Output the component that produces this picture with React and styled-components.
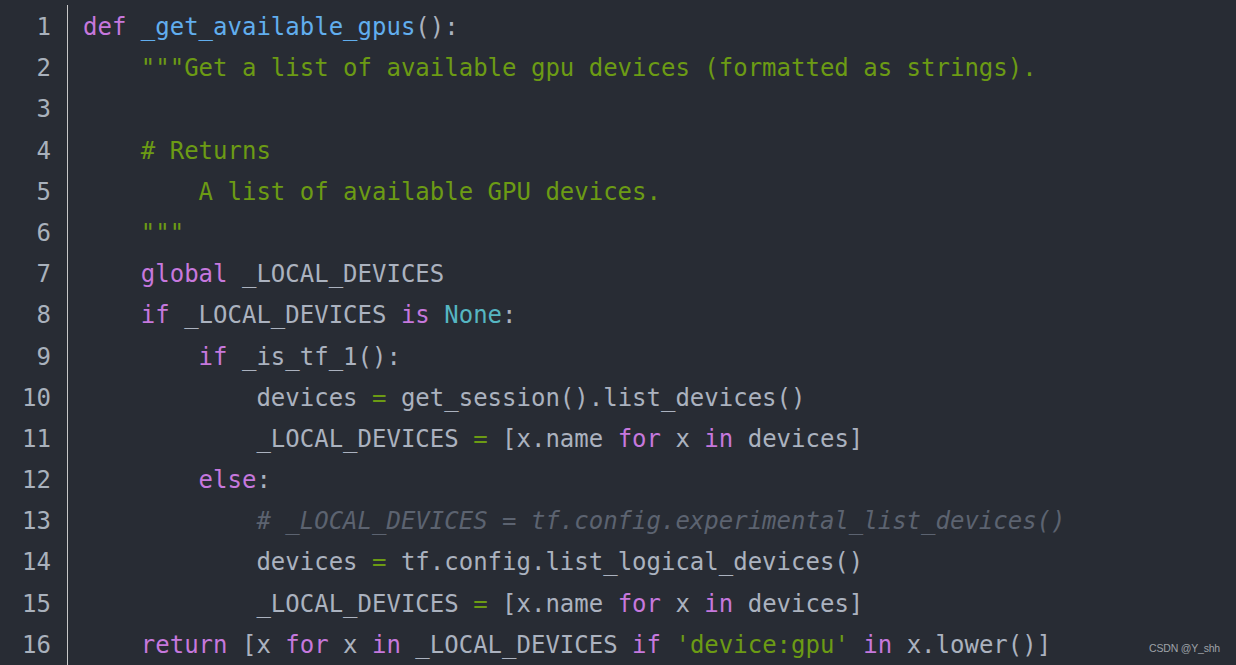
import React from 'react';
import styled, { createGlobalStyle } from 'styled-components';

const GlobalStyle = createGlobalStyle`
  html, body {
    margin: 0;
    padding: 0;
    background: #282c34;
  }
`;

const colors = {
  plain: '#abb2bf',
  kw: '#c678dd',
  title: '#61aeee',
  str: '#6c9b14',
  op: '#6c9b14',
  lit: '#56b6c2',
  comment: '#5c6370',
};

const Page = styled.div`
  position: relative;
  width: 1236px;
  height: 665px;
  overflow: hidden;
  background: #282c34;
  padding-top: 5px;
  box-sizing: border-box;
`;

const CodeBlock = styled.div`
  display: flex;
  height: 100%;
  font-family: 'DejaVu Sans Mono', 'Liberation Mono', monospace;
  font-size: 24px;
  line-height: 41.2px;
`;

const Gutter = styled.ul`
  margin: 0;
  padding: 2px 16px 0 0;
  width: 68px;
  box-sizing: border-box;
  list-style: none;
  text-align: right;
  color: #a9b1bc;
  border-right: 1px solid #c8c8c8;
`;

const LineNo = styled.li`
  height: 41.2px;
`;

const Code = styled.pre`
  margin: 0;
  padding: 2px 0 0 15px;
  font: inherit;
  color: ${colors.plain};
`;

const Line = styled.div`
  height: 41.2px;
  white-space: pre;
`;

const Token = styled.span`
  color: ${p => colors[p.$kind] || colors.plain};
  font-style: ${p => (p.$kind === 'comment' ? 'italic' : 'normal')};
`;

const Watermark = styled.div`
  position: absolute;
  right: 16px;
  bottom: 11px;
  font-family: 'Liberation Sans', Arial, sans-serif;
  font-size: 10.5px;
  letter-spacing: -0.2px;
  color: #9ea2a8;
`;

const lines = [
  [['kw', 'def'], ['plain', ' '], ['title', '_get_available_gpus'], ['plain', '():']],
  [['str', '    """Get a list of available gpu devices (formatted as strings).']],
  [['str', '']],
  [['str', '    # Returns']],
  [['str', '        A list of available GPU devices.']],
  [['str', '    """']],
  [['plain', '    '], ['kw', 'global'], ['plain', ' _LOCAL_DEVICES']],
  [['plain', '    '], ['kw', 'if'], ['plain', ' _LOCAL_DEVICES '], ['kw', 'is'], ['plain', ' '], ['lit', 'None'], ['plain', ':']],
  [['plain', '        '], ['kw', 'if'], ['plain', ' _is_tf_1():']],
  [['plain', '            devices '], ['op', '='], ['plain', ' get_session().list_devices()']],
  [['plain', '            _LOCAL_DEVICES '], ['op', '='], ['plain', ' [x.name '], ['kw', 'for'], ['plain', ' x '], ['kw', 'in'], ['plain', ' devices]']],
  [['plain', '        '], ['kw', 'else'], ['plain', ':']],
  [['plain', '            '], ['comment', '# _LOCAL_DEVICES = tf.config.experimental_list_devices()']],
  [['plain', '            devices '], ['op', '='], ['plain', ' tf.config.list_logical_devices()']],
  [['plain', '            _LOCAL_DEVICES '], ['op', '='], ['plain', ' [x.name '], ['kw', 'for'], ['plain', ' x '], ['kw', 'in'], ['plain', ' devices]']],
  [['plain', '    '], ['kw', 'return'], ['plain', ' [x '], ['kw', 'for'], ['plain', ' x '], ['kw', 'in'], ['plain', ' _LOCAL_DEVICES '], ['kw', 'if'], ['plain', ' '], ['str', "'device:gpu'"], ['plain', ' '], ['kw', 'in'], ['plain', ' x.lower()]']],
];

export default function App() {
  return (
    <Page>
      <GlobalStyle />
      <CodeBlock>
        <Gutter>
          {lines.map((_, i) => (
            <LineNo key={i}>{i + 1}</LineNo>
          ))}
        </Gutter>
        <Code>
          {lines.map((tokens, i) => (
            <Line key={i}>
              {tokens.map(([kind, text], j) => (
                <Token key={j} $kind={kind}>
                  {text}
                </Token>
              ))}
            </Line>
          ))}
        </Code>
      </CodeBlock>
      <Watermark>CSDN @Y_shh</Watermark>
    </Page>
  );
}
